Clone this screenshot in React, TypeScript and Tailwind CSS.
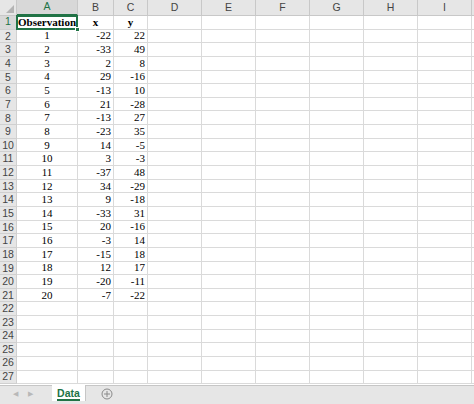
import React from "react";

const rows: [number, number, number][] = [
  [1, -22, 22],
  [2, -33, 49],
  [3, 2, 8],
  [4, 29, -16],
  [5, -13, 10],
  [6, 21, -28],
  [7, -13, 27],
  [8, -23, 35],
  [9, 14, -5],
  [10, 3, -3],
  [11, -37, 48],
  [12, 34, -29],
  [13, 9, -18],
  [14, -33, 31],
  [15, 20, -16],
  [16, -3, 14],
  [17, -15, 18],
  [18, 12, 17],
  [19, -20, -11],
  [20, -7, -22],
];

const emptyCols = ["D", "E", "F", "G", "H", "I"];
const serif = { fontFamily: '"Liberation Serif", "Times New Roman", serif' };
const sans = { fontFamily: '"Liberation Sans", Arial, sans-serif' };

function RowHead({ n, active }: { n: number; active?: boolean }) {
  return (
    <div
      style={sans}
      className={`w-[17px] shrink-0 flex items-center justify-center border-r border-b border-[#d0d0d0] text-[10.5px] ${
        active ? "bg-[#d8d8d8] text-[#217346]" : "bg-[#e6e6e6] text-[#444]"
      }`}
    >
      {n}
    </div>
  );
}

function EmptyCells() {
  return (
    <>
      {emptyCols.map((c) => (
        <div key={c} className="w-[54px] shrink-0 border-r border-b border-[#dadada]" />
      ))}
      <div className="flex-1 border-b border-[#dadada]" />
    </>
  );
}

export default function App() {
  const total = 27;
  return (
    <div className="w-[474px] h-[404px] bg-white flex flex-col overflow-hidden" style={sans}>
      {/* column header */}
      <div className="flex h-[16px] shrink-0 bg-[#e6e6e6] text-[10.5px] text-[#444]">
        <div className="w-[17px] shrink-0 border-r border-b border-[#c8c8c8] relative">
          <div className="absolute right-[2px] bottom-[2px] w-0 h-0 border-l-[8px] border-l-transparent border-b-[8px] border-b-[#b4b4b4]" />
        </div>
        <div className="w-[61px] shrink-0 flex items-center justify-center bg-[#d8d8d8] text-[#217346] border-r border-[#c8c8c8] border-b-2 border-b-[#217346]">
          A
        </div>
        <div className="w-[36px] shrink-0 flex items-center justify-center border-r border-b border-[#c8c8c8]">B</div>
        <div className="w-[34px] shrink-0 flex items-center justify-center border-r border-b border-[#c8c8c8]">C</div>
        {emptyCols.map((c) => (
          <div key={c} className="w-[54px] shrink-0 flex items-center justify-center border-r border-b border-[#c8c8c8]">
            {c}
          </div>
        ))}
        <div className="flex-1 border-b border-[#c8c8c8]" />
      </div>

      {/* grid */}
      <div className="flex flex-col" style={serif}>
        <div className="flex h-[13.65px] text-[11px] text-black">
          <RowHead n={1} active />
          <div className="w-[61px] shrink-0 relative flex items-center justify-center font-bold border-b border-r border-[#dadada]">
            <div className="absolute -left-px -top-px -right-px -bottom-px border-2 border-[#217346]" />
            <div className="absolute right-[-3px] bottom-[-3px] w-[5px] h-[5px] bg-[#217346] border border-white" />
            Observation
          </div>
          <div className="w-[36px] shrink-0 flex items-center justify-center font-bold border-r border-b border-[#dadada]">x</div>
          <div className="w-[34px] shrink-0 flex items-center justify-center font-bold border-r border-b border-[#dadada]">y</div>
          <EmptyCells />
        </div>
        {rows.map(([o, x, y], i) => (
          <div key={o} className="flex h-[13.65px] text-[11px] text-black leading-none">
            <RowHead n={i + 2} />
            <div className="w-[61px] shrink-0 flex items-center justify-center border-r border-b border-[#dadada]">{o}</div>
            <div className="w-[36px] shrink-0 flex items-center justify-end pr-[2px] border-r border-b border-[#dadada]">{x}</div>
            <div className="w-[34px] shrink-0 flex items-center justify-end pr-[2px] border-r border-b border-[#dadada]">{y}</div>
            <EmptyCells />
          </div>
        ))}
        {Array.from({ length: total - 21 }, (_, k) => k + 22).map((n) => (
          <div key={n} className="flex h-[13.65px]">
            <RowHead n={n} />
            <div className="w-[61px] shrink-0 border-r border-b border-[#dadada]" />
            <div className="w-[36px] shrink-0 border-r border-b border-[#dadada]" />
            <div className="w-[34px] shrink-0 border-r border-b border-[#dadada]" />
            <EmptyCells />
          </div>
        ))}
      </div>

      {/* sheet tabs */}
      <div className="flex-1 flex items-start bg-[#e6e6e6] border-t border-[#c6c6c6] mt-[1px]">
        <div className="flex items-center h-[16px] pl-[13px] gap-[10px] text-[7px] text-[#b8b8b8]">
          <span>◀</span>
          <span>▶</span>
        </div>
        <div className="ml-[19px] w-[33px] h-[16px] -mt-px bg-white flex items-start justify-center shadow-[1px_0_0_#c6c6c6]">
          <span className="text-[10.5px] font-bold text-[#217346] border-b-2 border-[#217346] leading-[12px] mt-[2px]">Data</span>
        </div>
        <div className="ml-[16px] h-[16px] flex items-center">
          <svg width="12" height="12" viewBox="0 0 12 12">
            <circle cx="6" cy="6" r="5" fill="none" stroke="#8a8a8a" strokeWidth="1" />
            <path d="M6 3v6M3 6h6" stroke="#8a8a8a" strokeWidth="1" />
          </svg>
        </div>
      </div>
    </div>
  );
}
